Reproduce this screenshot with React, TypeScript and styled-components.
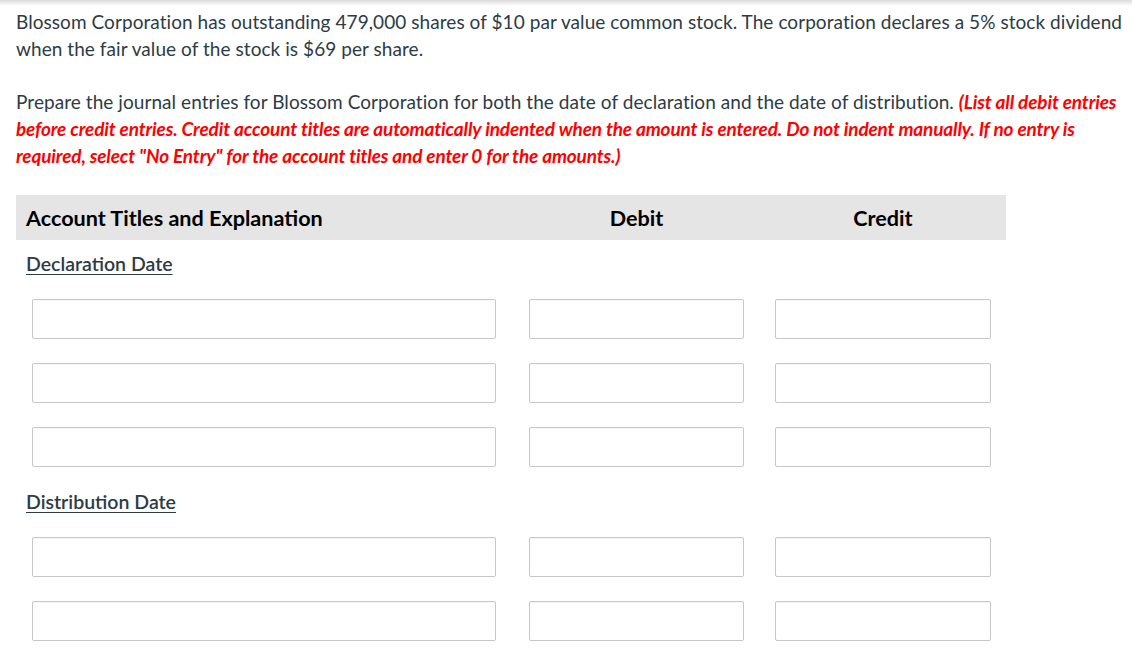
import * as React from 'react';
import styled, { createGlobalStyle } from 'styled-components';

const GlobalStyle = createGlobalStyle`
  html, body {
    margin: 0;
    padding: 0;
    background: #fff;
  }
  body {
    font-family: Lato, "Open Sans", sans-serif;
    color: #2d3b45;
  }
`;

const Page = styled.div`
  position: relative;
  padding: 8px 6px 0 16px;

  &::before {
    content: '';
    position: absolute;
    left: 0;
    right: 0;
    top: 0;
    height: 6px;
    background: linear-gradient(to bottom, rgba(0, 0, 0, 0.14), rgba(0, 0, 0, 0));
  }
`;

const Para = styled.p`
  margin: 0 0 26px;
  font-size: 19px;
  line-height: 27px;
  letter-spacing: 0.06px;
`;

const Warn = styled.em`
  color: #ff0000;
  font-weight: 700;
  font-style: italic;
  letter-spacing: -0.15px;
`;

const Table = styled.div`
  width: 990px;
  display: grid;
  grid-template-columns: 497px 247px 246px;
`;

const HeadCell = styled.div<{ $center?: boolean }>`
  background: #e5e5e5;
  height: 45px;
  display: flex;
  align-items: center;
  justify-content: ${(p) => (p.$center ? 'center' : 'flex-start')};
  padding-left: ${(p) => (p.$center ? '0' : '10px')};
  font-size: 21.6px;
  font-weight: 700;
  color: #000;
`;

const Section = styled.div<{ $top: number }>`
  grid-column: 1 / -1;
  padding: ${(p) => p.$top}px 0 25px 10px;
  font-size: 19.5px;
  font-weight: 600;
  line-height: 20px;
  text-decoration: underline;
  text-underline-offset: 3px;
  text-decoration-thickness: 1px;
`;

const Cell = styled.div<{ $pad: number }>`
  height: 64px;
  padding-left: ${(p) => p.$pad}px;
`;

const Field = styled.input<{ $w: number }>`
  box-sizing: border-box;
  width: ${(p) => p.$w}px;
  height: 40px;
  border: 1px solid #c7c7c7;
  border-radius: 2px;
  background: #fff;
  box-shadow: inset 0 1px 1px rgba(0, 0, 0, 0.04);
  outline: none;
  font: inherit;
  margin: 0;
`;

function EntryRow() {
  return (
    <>
      <Cell $pad={16}>
        <Field $w={464} />
      </Cell>
      <Cell $pad={16}>
        <Field $w={215} />
      </Cell>
      <Cell $pad={15}>
        <Field $w={216} />
      </Cell>
    </>
  );
}

export default function App() {
  return (
    <>
      <GlobalStyle />
      <Page>
        <Para>
          Blossom Corporation has outstanding 479,000 shares of $10 par value common stock. The corporation declares a
          5% stock dividend when the fair value of the stock is $69 per share.
        </Para>
        <Para>
          Prepare the journal entries for Blossom Corporation for both the date of declaration and the date of
          distribution.{' '}
          <Warn>
            (List all debit entries before credit entries. Credit account titles are automatically indented when the
            amount is entered. Do not indent manually. If no entry is required, select "No Entry" for the account
            titles and enter 0 for the amounts.)
          </Warn>
        </Para>
        <Table>
          <HeadCell>Account Titles and Explanation</HeadCell>
          <HeadCell $center>Debit</HeadCell>
          <HeadCell $center>Credit</HeadCell>

          <Section $top={14}>Declaration Date</Section>
          <EntryRow />
          <EntryRow />
          <EntryRow />

          <Section $top={1}>Distribution Date</Section>
          <EntryRow />
          <EntryRow />
        </Table>
      </Page>
    </>
  );
}
